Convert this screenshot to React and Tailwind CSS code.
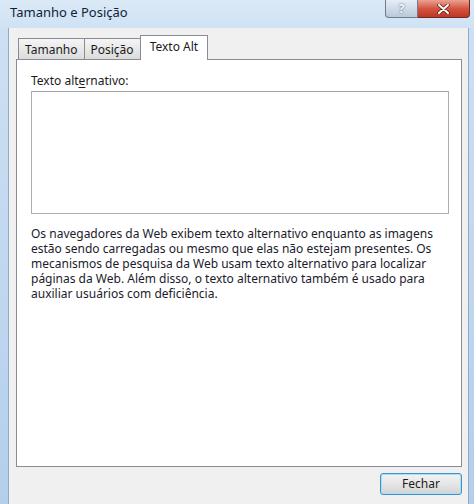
const font = "font-['Segoe_UI','Noto_Sans','Liberation_Sans',sans-serif]"

const Tab = ({ label, active }) => {
  if (active) {
    return (
      <div className="relative z-10 -mb-px -ml-px flex h-[25px] items-start border border-b-0 border-[#898c95] bg-white px-[9px] pt-[3px] text-[12px] leading-[16px] text-[#1b1b1b]">
        {label}
      </div>
    )
  }
  return (
    <div className="flex h-[21px] items-start border border-b-0 border-[#898c95] bg-gradient-to-b from-[#f5f5f5] to-[#dcdcdc] px-[6px] pt-[3px] text-[12px] leading-[16px] text-[#1b1b1b] first:ml-[2px] [&+&]:-ml-px">
      {label}
    </div>
  )
}

const App = () => {
  return (
    <div className={`${font} flex h-[504px] w-[474px] flex-col overflow-hidden bg-gradient-to-b from-[#cfe1f3] via-[#c2d8ef] to-[#b4cfec]`}>
      {/* title bar */}
      <div className="flex h-[28px] items-start bg-gradient-to-b from-[#dbe9f7] to-[#cfe2f4]">
        <div className="pl-[10px] pt-[3px] text-[13px] text-[#0f1f3a]">Tamanho e Posição</div>
        <div className="ml-auto flex">
          <div className="flex h-[18px] w-[33px] items-center justify-center rounded-bl-[4px] border border-t-0 border-[#6b7c8f] bg-gradient-to-b from-[#e6eef6] to-[#b9c9da] text-[12px] font-bold text-[#f4f7fb] [text-shadow:0_0_2px_#44556a]">
            ?
          </div>
          <div className="mr-[4px] flex h-[18px] w-[52px] items-center justify-center rounded-br-[4px] border border-l-0 border-t-0 border-[#6e2a22] bg-gradient-to-b from-[#e9a193] via-[#d4553f] to-[#bf3523]">
            <svg width="13" height="10" viewBox="0 0 13 10">
              <path d="M2 1 L11 9 M11 1 L2 9" stroke="#5a1a12" strokeWidth="3.4" strokeLinecap="round" />
              <path d="M2 1 L11 9 M11 1 L2 9" stroke="#ffffff" strokeWidth="2" strokeLinecap="round" />
            </svg>
          </div>
        </div>
      </div>

      {/* body */}
      <div className="ml-[8px] mr-[5px] flex flex-1 flex-col border-l border-r border-[#8fa9c6] bg-[#f0f0f0] pl-[7px] pr-[6px] pt-[7px]">
        <div className="flex items-end">
          <Tab label="Tamanho" />
          <Tab label="Posição" />
          <Tab label="Texto Alt" active />
        </div>

        <div className="flex h-[408px] flex-col border border-[#898c95] bg-white pl-[14px] pr-[12px] pt-[13px]">
          <div className="text-[12px] leading-[16px] text-[#1b1b1b]">
            Texto alt<span className="underline underline-offset-2">e</span>rnativo:
          </div>
          <div className="mt-[2px] h-[123px] w-[418px] border border-[#abadb3] border-t-[#a0a4ad] bg-white" />
          <p className="mt-[12px] text-[12px] leading-[15px] text-[#1b1b2b]">
            Os navegadores da Web exibem texto alternativo enquanto as imagens<br />
            estão sendo carregadas ou mesmo que elas não estejam presentes. Os<br />
            mecanismos de pesquisa da Web usam texto alternativo para localizar<br />
            páginas da Web. Além disso, o texto alternativo também é usado para<br />
            auxiliar usuários com deficiência.
          </p>
        </div>

        <div className="mt-[6px] flex justify-end">
          <button className="h-[22px] w-[82px] rounded-[3px] border border-[#3c93c9] bg-gradient-to-b from-[#f2f2f2] via-[#e6e6e6] to-[#d2d2d2] text-[12px] leading-none text-[#1b1b1b] shadow-[0_0_0_1px_#a8e1f7_inset]">
            Fechar
          </button>
        </div>
      </div>
    </div>
  )
}

export default App
